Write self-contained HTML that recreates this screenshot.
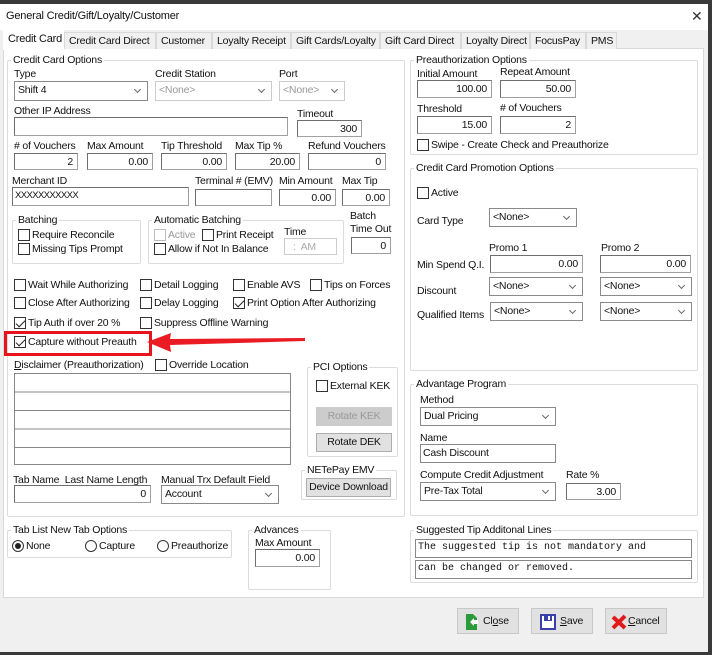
<!DOCTYPE html>
<html><head><meta charset="utf-8">
<style>
*{box-sizing:border-box;margin:0;padding:0}
body{width:712px;height:655px;position:relative;overflow:hidden;background:#f0f0f0;font-family:"Liberation Sans",Arial,sans-serif;font-size:10.5px;letter-spacing:-0.2px;color:#111}
div,span{position:absolute;white-space:nowrap}
.l{line-height:13px}
.i{background:#fff;border:1px solid #a0a0a0;border-top-color:#6e6e6e;border-left-color:#6e6e6e;text-align:right;padding-right:4px;line-height:16px}
.d{background:#fff;border:1px solid #8a8a8a;padding-left:3px;line-height:17px}
.d::after{content:"";position:absolute;right:7px;top:5px;width:4px;height:4px;border-right:1px solid #666;border-bottom:1px solid #666;transform:rotate(45deg)}
.dis{color:#999;border-color:#ccc}
.c{width:12px;height:12px;border:1px solid #333;background:#fff}
.ck::after{content:"";position:absolute;left:3px;top:0px;width:4px;height:8px;border-right:1.5px solid #222;border-bottom:1.5px solid #222;transform:rotate(45deg)}
.g{border:1px solid #dcdcdc;border-radius:2px}
.gl{background:#fff;padding:0 2px;line-height:13px}
.b{background:#e1e1e1;border:1px solid #adadad;text-align:center;line-height:17px}
.r{width:12px;height:12px;border:1px solid #333;border-radius:50%;background:#fff}
.tab{top:32px;height:17px;border:1px solid #d9d9d9;border-bottom:none;background:#f0f0f0;line-height:16px;padding-left:4px;overflow:hidden}
.bb{background:#e1e1e1;border:1px solid #c8c8c8;line-height:24px}
</style></head><body>
<div style="left:0;top:0;width:712px;height:4px;background:#3a3a3a"></div>
<div style="left:0;top:4px;width:708px;height:26px;background:#fff"></div>
<div style="left:708px;top:0;width:4px;height:655px;background:#3a3a3a"></div>
<div style="left:0;top:652px;width:712px;height:3px;background:#3a3a3a"></div>
<div class="l" style="left:6px;top:10px;font-size:11px">General Credit/Gift/Loyalty/Customer</div>
<div style="left:691px;top:8px;font-size:14px;color:#333">✕</div>

<div style="left:3px;top:48px;width:701px;height:550px;background:#fff;border:1px solid #d9d9d9"></div>
<div class="tab" style="left:3px;top:29px;height:21px;width:61px;background:#fff;font-size:11px;line-height:18px;border-color:#fff">Credit Card</div>
<div class="tab" style="left:64px;width:92px">Credit Card Direct</div>
<div class="tab" style="left:156px;width:56px">Customer</div>
<div class="tab" style="left:212px;width:79px">Loyalty Receipt</div>
<div class="tab" style="left:291px;width:89px">Gift Cards/Loyalty</div>
<div class="tab" style="left:380px;width:81px">Gift Card Direct</div>
<div class="tab" style="left:461px;width:69px">Loyalty Direct</div>
<div class="tab" style="left:530px;width:56px">FocusPay</div>
<div class="tab" style="left:586px;width:31px">PMS</div>

<!-- Left group -->
<div class="g" style="left:7px;top:60px;width:398px;height:457px"></div>
<div class="gl" style="left:11px;top:54px">Credit Card Options</div>
<div class="l" style="left:14px;top:68px">Type</div>
<div class="d" style="left:14px;top:81px;width:134px;height:20px">Shift 4</div>
<div class="l" style="left:155px;top:68px">Credit Station</div>
<div class="d dis" style="left:155px;top:81px;width:117px;height:20px">&lt;None&gt;</div>
<div class="l" style="left:279px;top:68px">Port</div>
<div class="d dis" style="left:279px;top:81px;width:66px;height:20px">&lt;None&gt;</div>
<div class="l" style="left:14px;top:105px">Other IP Address</div>
<div class="i" style="left:14px;top:117px;width:274px;height:19px"></div>
<div class="l" style="left:297px;top:108px">Timeout</div>
<div class="i" style="left:297px;top:120px;width:65px;height:17px">300</div>
<div class="l" style="left:14px;top:140px">#&nbsp;of Vouchers</div>
<div class="l" style="left:87px;top:140px">Max Amount</div>
<div class="l" style="left:161px;top:140px">Tip Threshold</div>
<div class="l" style="left:235px;top:140px">Max Tip %</div>
<div class="l" style="left:308px;top:140px">Refund Vouchers</div>
<div class="i" style="left:14px;top:153px;width:64px;height:17px">2</div>
<div class="i" style="left:87px;top:153px;width:66px;height:17px">0.00</div>
<div class="i" style="left:161px;top:153px;width:66px;height:17px">0.00</div>
<div class="i" style="left:235px;top:153px;width:65px;height:17px">20.00</div>
<div class="i" style="left:308px;top:153px;width:78px;height:17px">0</div>
<div class="l" style="left:12px;top:175px">Merchant ID</div>
<div class="i" style="left:12px;top:187px;width:177px;height:19px;text-align:left;padding-left:2px;font-size:9.5px;letter-spacing:-0.6px">XXXXXXXXXXX</div>
<div class="l" style="left:195px;top:175px">Terminal # (EMV)</div>
<div class="i" style="left:195px;top:189px;width:77px;height:17px"></div>
<div class="l" style="left:279px;top:175px">Min Amount</div>
<div class="i" style="left:279px;top:189px;width:57px;height:17px">0.00</div>
<div class="l" style="left:342px;top:175px">Max Tip</div>
<div class="i" style="left:342px;top:189px;width:48px;height:17px">0.00</div>

<div class="g" style="left:12px;top:220px;width:129px;height:44px"></div>
<div class="gl" style="left:16px;top:214px">Batching</div>
<div class="c" style="left:18px;top:229px"></div><div class="l" style="left:32px;top:229px">Require Reconcile</div>
<div class="c" style="left:18px;top:243px"></div><div class="l" style="left:32px;top:243px">Missing Tips Prompt</div>
<div class="g" style="left:148px;top:220px;width:196px;height:44px"></div>
<div class="gl" style="left:152px;top:214px">Automatic Batching</div>
<div class="c" style="left:154px;top:229px;border-color:#bbb"></div><div class="l" style="left:168px;top:229px;color:#999">Active</div>
<div class="c" style="left:202px;top:229px"></div><div class="l" style="left:216px;top:229px">Print Receipt</div>
<div class="l" style="left:284px;top:226px">Time</div>
<div class="i" style="left:284px;top:238px;width:53px;height:17px;border-color:#ccc;color:#aaa;text-align:left;padding-left:8px">:&nbsp; AM</div>
<div class="c" style="left:154px;top:243px"></div><div class="l" style="left:168px;top:243px">Allow if Not In Balance</div>
<div class="l" style="left:350px;top:210px">Batch</div>
<div class="l" style="left:350px;top:223px">Time Out</div>
<div class="i" style="left:351px;top:237px;width:40px;height:17px">0</div>

<div class="c" style="left:14px;top:279px"></div><div class="l" style="left:28px;top:279px">Wait While Authorizing</div>
<div class="c" style="left:140px;top:279px"></div><div class="l" style="left:154px;top:279px">Detail Logging</div>
<div class="c" style="left:233px;top:279px"></div><div class="l" style="left:247px;top:279px">Enable AVS</div>
<div class="c" style="left:310px;top:279px"></div><div class="l" style="left:324px;top:279px">Tips on Forces</div>
<div class="c" style="left:14px;top:297px"></div><div class="l" style="left:28px;top:297px">Close After Authorizing</div>
<div class="c" style="left:140px;top:297px"></div><div class="l" style="left:154px;top:297px">Delay Logging</div>
<div class="c ck" style="left:233px;top:297px"></div><div class="l" style="left:247px;top:297px">Print Option After Authorizing</div>
<div class="c ck" style="left:14px;top:317px"></div><div class="l" style="left:28px;top:317px">Tip Auth if over 20 %</div>
<div class="c" style="left:140px;top:317px"></div><div class="l" style="left:154px;top:317px">Suppress Offline Warning</div>
<div class="c ck" style="left:14px;top:336px"></div><div class="l" style="left:28px;top:336px">Capture without Preauth</div>
<div style="left:4px;top:331px;width:148px;height:25px;border:3px solid #e8141b"></div>
<svg style="position:absolute;left:145px;top:330px" width="170" height="25"><path d="M2 12 L26 3 L25 9 L160 8 L160 11 L25 15 L26 22 Z" fill="#ea1b22"/></svg>

<div class="l" style="left:14px;top:359px"><u>D</u>isclaimer (Preauthorization)</div>
<div class="c" style="left:155px;top:359px"></div><div class="l" style="left:169px;top:359px">Override Location</div>
<div style="left:14px;top:373px;width:277px;height:92px;border:1px solid #888;background:repeating-linear-gradient(#fff 0 17.5px,#888 17.5px 18.5px)"></div>
<div class="l" style="left:13px;top:474px">Tab Name&nbsp; Last Name Length</div>
<div class="i" style="left:14px;top:485px;width:137px;height:18px">0</div>
<div class="l" style="left:161px;top:474px">Manual Trx Default Field</div>
<div class="d" style="left:161px;top:485px;width:118px;height:19px">Account</div>
<div class="g" style="left:307px;top:367px;width:91px;height:90px"></div>
<div class="gl" style="left:311px;top:361px">PCI Options</div>
<div class="c" style="left:316px;top:380px"></div><div class="l" style="left:330px;top:380px">External KEK</div>
<div class="b" style="left:316px;top:407px;width:76px;height:19px;color:#999;background:#ccc;border-color:#ccc">Rotate KEK</div>
<div class="b" style="left:316px;top:433px;width:76px;height:19px">Rotate DEK</div>
<div class="g" style="left:301px;top:470px;width:96px;height:30px"></div>
<div class="gl" style="left:305px;top:464px">NETePay EMV</div>
<div class="b" style="left:306px;top:478px;width:85px;height:19px">Device Download</div>

<div class="g" style="left:7px;top:530px;width:225px;height:28px"></div>
<div class="gl" style="left:11px;top:524px">Tab List New Tab Options</div>
<div class="r" style="left:12px;top:540px"><span style="left:2px;top:2px;width:6px;height:6px;border-radius:50%;background:#222"></span></div><div class="l" style="left:26px;top:540px">None</div>
<div class="r" style="left:85px;top:540px"></div><div class="l" style="left:99px;top:540px">Capture</div>
<div class="r" style="left:157px;top:540px"></div><div class="l" style="left:171px;top:540px">Preauthorize</div>
<div class="g" style="left:248px;top:530px;width:83px;height:60px"></div>
<div class="gl" style="left:252px;top:524px">Advances</div>
<div class="l" style="left:255px;top:537px">Max Amount</div>
<div class="i" style="left:255px;top:549px;width:65px;height:18px">0.00</div>

<!-- Right -->
<div class="g" style="left:410px;top:60px;width:288px;height:95px"></div>
<div class="gl" style="left:414px;top:54px">Preauthorization Options</div>
<div class="l" style="left:417px;top:68px">Initial Amount</div>
<div class="l" style="left:500px;top:66px">Repeat Amount</div>
<div class="i" style="left:417px;top:80px;width:75px;height:18px">100.00</div>
<div class="i" style="left:500px;top:80px;width:76px;height:18px">50.00</div>
<div class="l" style="left:417px;top:103px">Threshold</div>
<div class="l" style="left:500px;top:102px">#&nbsp;of Vouchers</div>
<div class="i" style="left:417px;top:116px;width:75px;height:18px">15.00</div>
<div class="i" style="left:500px;top:116px;width:76px;height:18px">2</div>
<div class="c" style="left:417px;top:139px"></div><div class="l" style="left:431px;top:139px">Swipe - Create Check and Preauthorize</div>
<div class="g" style="left:410px;top:168px;width:288px;height:203px"></div>
<div class="gl" style="left:414px;top:162px">Credit Card Promotion Options</div>
<div class="c" style="left:417px;top:187px"></div><div class="l" style="left:431px;top:187px">Active</div>
<div class="l" style="left:417px;top:215px">Card Type</div>
<div class="d" style="left:489px;top:208px;width:88px;height:19px">&lt;None&gt;</div>
<div class="l" style="left:489px;top:242px">Promo 1</div>
<div class="l" style="left:601px;top:242px">Promo 2</div>
<div class="l" style="left:417px;top:259px">Min Spend Q.I.</div>
<div class="i" style="left:490px;top:255px;width:93px;height:18px">0.00</div>
<div class="i" style="left:600px;top:255px;width:91px;height:18px">0.00</div>
<div class="l" style="left:417px;top:285px">Discount</div>
<div class="d" style="left:489px;top:277px;width:94px;height:19px">&lt;None&gt;</div>
<div class="d" style="left:600px;top:277px;width:92px;height:19px">&lt;None&gt;</div>
<div class="l" style="left:417px;top:309px">Qualified Items</div>
<div class="d" style="left:490px;top:302px;width:93px;height:19px">&lt;None&gt;</div>
<div class="d" style="left:600px;top:302px;width:92px;height:19px">&lt;None&gt;</div>

<div class="g" style="left:410px;top:384px;width:288px;height:132px"></div>
<div class="gl" style="left:414px;top:378px">Advantage Program</div>
<div class="l" style="left:420px;top:394px">Method</div>
<div class="d" style="left:420px;top:407px;width:136px;height:19px">Dual Pricing</div>
<div class="l" style="left:420px;top:432px">Name</div>
<div class="i" style="left:420px;top:444px;width:136px;height:19px;text-align:left;padding-left:2px;border-color:#888">Cash Discount</div>
<div class="l" style="left:420px;top:469px">Compute Credit Adjustment</div>
<div class="l" style="left:566px;top:469px">Rate %</div>
<div class="d" style="left:420px;top:482px;width:136px;height:19px">Pre-Tax Total</div>
<div class="i" style="left:566px;top:483px;width:55px;height:17px">3.00</div>

<div class="g" style="left:410px;top:530px;width:288px;height:53px"></div>
<div class="gl" style="left:414px;top:524px">Suggested Tip Additonal Lines</div>
<div class="i" style="left:415px;top:539px;width:277px;height:19px;text-align:left;padding-left:2px;font-family:'Liberation Mono',monospace;font-size:10px;letter-spacing:0;border-color:#888">The suggested tip is not mandatory and</div>
<div class="i" style="left:415px;top:560px;width:277px;height:19px;text-align:left;padding-left:2px;font-family:'Liberation Mono',monospace;font-size:10px;letter-spacing:0;border-color:#888">can be changed or removed.</div>

<!-- Buttons -->
<div class="bb" style="left:457px;top:608px;width:62px;height:26px">
<svg style="position:absolute;left:7px;top:5px" width="14" height="16"><path d="M1 0 H8 L12 4 V16 H1 Z" fill="#2a9a3a"/><path d="M5 8 L9 4 V6 H13 V10 H9 V12 Z" fill="#fff"/></svg>
<span style="left:25px;top:0">Cl<u>o</u>se</span></div>
<div class="bb" style="left:531px;top:608px;width:62px;height:26px">
<svg style="position:absolute;left:8px;top:5px" width="16" height="16"><rect x="1" y="1" width="14" height="14" fill="#fff" stroke="#3b3fa8" stroke-width="2"/><rect x="4" y="1" width="8" height="6" fill="#3b3fa8"/><rect x="8" y="2" width="2" height="4" fill="#fff"/></svg>
<span style="left:28px;top:0"><u>S</u>ave</span></div>
<div class="bb" style="left:605px;top:608px;width:62px;height:26px">
<svg style="position:absolute;left:5px;top:5px" width="16" height="16"><path d="M2 3 L14 14 M14 2 L2 14" stroke="#e01a1a" stroke-width="4"/></svg>
<span style="left:22px;top:0"><u>C</u>ancel</span></div>
</body></html>
